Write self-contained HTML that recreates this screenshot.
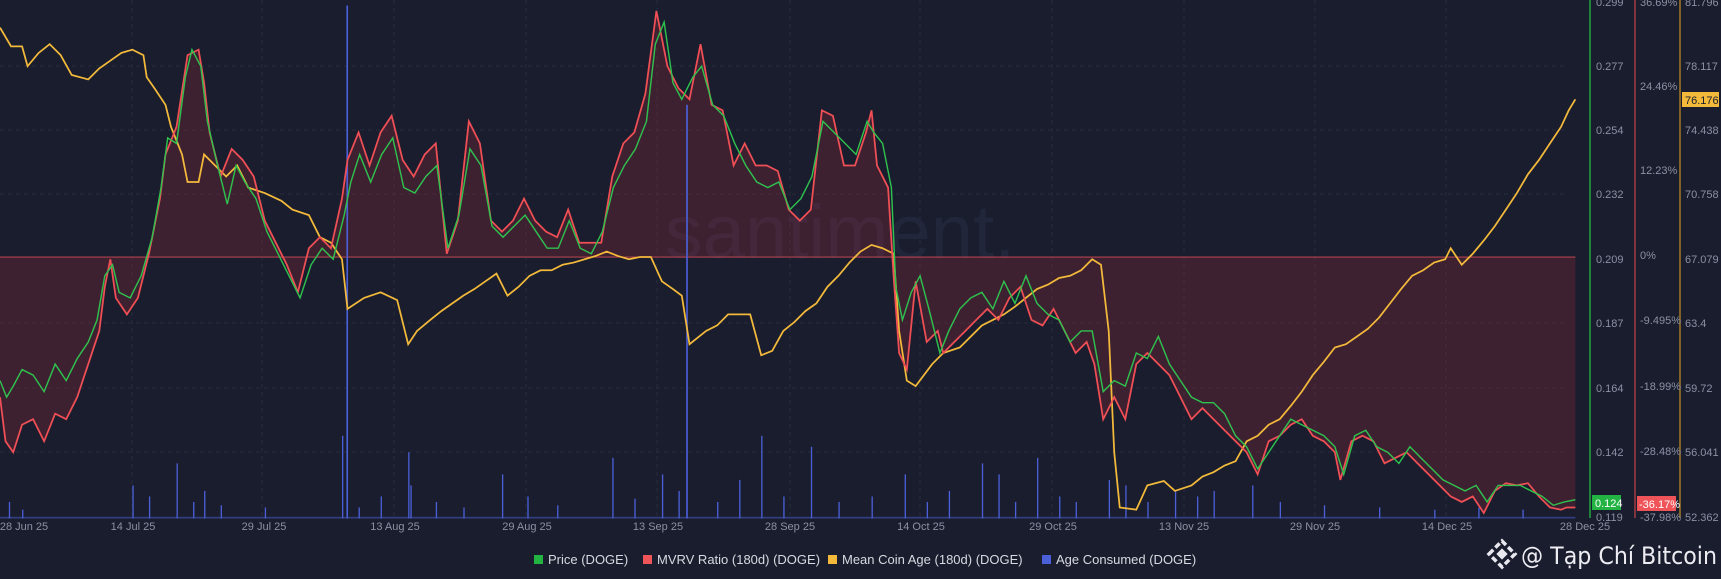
<!DOCTYPE html>
<html><head><meta charset="utf-8"><style>
html,body{margin:0;padding:0;background:#1a1d2d;}
body{width:1721px;height:579px;overflow:hidden;position:relative;font-family:"Liberation Sans",sans-serif;}
svg{position:absolute;left:0;top:0}
.ax{font-size:11px;fill:#8b90a4}
.dt{font-size:11px;fill:#8b90a4}
.lg{font-size:13px;fill:#d7d9e2}
</style></head><body>
<svg width="1721" height="579" viewBox="0 0 1721 579">
<rect width="1721" height="579" fill="#1a1d2d"/>
<text x="840" y="258" font-size="76" fill="#22263a" text-anchor="middle" font-family="Liberation Sans, sans-serif">santiment.</text>
<g stroke="#262a3c" stroke-width="1" stroke-dasharray="4 4">
<line x1="0" y1="66" x2="1568" y2="66"/><line x1="0" y1="130" x2="1568" y2="130"/><line x1="0" y1="194" x2="1568" y2="194"/><line x1="0" y1="323" x2="1568" y2="323"/><line x1="0" y1="388" x2="1568" y2="388"/><line x1="0" y1="452" x2="1568" y2="452"/>
<line x1="132" y1="0" x2="132" y2="518"/><line x1="262" y1="0" x2="262" y2="518"/><line x1="394" y1="0" x2="394" y2="518"/><line x1="526" y1="0" x2="526" y2="518"/><line x1="657" y1="0" x2="657" y2="518"/><line x1="790" y1="0" x2="790" y2="518"/><line x1="920" y1="0" x2="920" y2="518"/><line x1="1052" y1="0" x2="1052" y2="518"/><line x1="1184" y1="0" x2="1184" y2="518"/><line x1="1315" y1="0" x2="1315" y2="518"/><line x1="1446" y1="0" x2="1446" y2="518"/>
</g>
<g transform="scale(1.1032)">
<polygon fill="rgba(140,45,60,0.32)" points="0,233 0,360 5,400 12,410 20,385 30,380 40,400 50,375 60,380 70,360 80,330 90,300 95,260 100,235 105,270 115,285 125,270 135,230 145,180 150,140 160,115 170,50 180,45 185,75 190,120 200,160 210,135 220,145 230,160 240,200 250,220 260,240 270,265 280,225 290,215 300,225 310,180 315,145 325,120 335,150 345,120 355,105 365,145 375,160 385,140 395,130 405,230 415,200 425,110 435,130 445,200 455,210 465,200 475,180 485,200 495,210 505,215 515,190 525,220 535,220 545,220 555,160 565,130 575,120 585,85 595,10 605,60 615,80 625,90 635,40 645,95 655,100 665,150 675,130 685,150 695,150 705,155 715,190 725,200 735,190 745,100 755,105 765,150 775,150 785,120 790,100 795,150 805,170 810,250 815,320 822,335 830,255 840,310 850,300 855,320 865,310 875,300 885,290 895,280 905,290 915,270 925,260 935,290 945,295 955,280 965,300 975,320 985,310 992,330 1000,380 1010,360 1020,380 1030,330 1040,320 1050,330 1060,340 1070,360 1080,380 1090,370 1100,380 1110,390 1120,400 1130,410 1140,430 1150,400 1160,395 1170,385 1180,380 1190,395 1200,400 1210,410 1215,435 1225,400 1235,395 1245,400 1255,420 1265,415 1275,410 1285,420 1295,430 1305,440 1315,450 1325,455 1335,450 1345,465 1355,445 1365,438 1375,440 1385,438 1395,450 1405,460 1415,462 1420,460 1428,460 1428,233"/>
<line x1="0" y1="233" x2="1428" y2="233" stroke="#b0424e" stroke-width="1"/>
<g fill="#4a5fd8">
<rect x="314" y="5" width="1.5" height="465"/><rect x="622" y="95" width="1.5" height="375"/>
<rect x="8" y="455" width="1.2" height="15"/><rect x="20" y="462" width="1.2" height="8"/><rect x="120" y="440" width="1.2" height="30"/><rect x="135" y="450" width="1.2" height="20"/><rect x="160" y="420" width="1.2" height="50"/><rect x="175" y="455" width="1.2" height="15"/><rect x="185" y="445" width="1.2" height="25"/><rect x="200" y="458" width="1.2" height="12"/><rect x="240" y="460" width="1.2" height="10"/><rect x="310" y="395" width="1.2" height="75"/><rect x="325" y="460" width="1.2" height="10"/><rect x="345" y="450" width="1.2" height="20"/><rect x="370" y="410" width="1.2" height="60"/><rect x="372" y="440" width="1.2" height="30"/><rect x="395" y="455" width="1.2" height="15"/><rect x="420" y="460" width="1.2" height="10"/><rect x="455" y="430" width="1.2" height="40"/><rect x="478" y="450" width="1.2" height="20"/><rect x="505" y="458" width="1.2" height="12"/><rect x="555" y="415" width="1.2" height="55"/><rect x="575" y="452" width="1.2" height="18"/><rect x="600" y="430" width="1.2" height="40"/><rect x="615" y="445" width="1.2" height="25"/><rect x="650" y="455" width="1.2" height="15"/><rect x="670" y="435" width="1.2" height="35"/><rect x="690" y="395" width="1.2" height="75"/><rect x="710" y="450" width="1.2" height="20"/><rect x="735" y="405" width="1.2" height="65"/><rect x="760" y="455" width="1.2" height="15"/><rect x="790" y="450" width="1.2" height="20"/><rect x="820" y="430" width="1.2" height="40"/><rect x="840" y="455" width="1.2" height="15"/><rect x="860" y="445" width="1.2" height="25"/><rect x="890" y="420" width="1.2" height="50"/><rect x="905" y="430" width="1.2" height="40"/><rect x="920" y="455" width="1.2" height="15"/><rect x="940" y="415" width="1.2" height="55"/><rect x="960" y="450" width="1.2" height="20"/><rect x="975" y="455" width="1.2" height="15"/><rect x="1005" y="435" width="1.2" height="35"/><rect x="1020" y="440" width="1.2" height="30"/><rect x="1040" y="455" width="1.2" height="15"/><rect x="1065" y="445" width="1.2" height="25"/><rect x="1085" y="450" width="1.2" height="20"/><rect x="1100" y="445" width="1.2" height="25"/><rect x="1135" y="440" width="1.2" height="30"/><rect x="1160" y="455" width="1.2" height="15"/><rect x="1200" y="458" width="1.2" height="12"/><rect x="1250" y="460" width="1.2" height="10"/><rect x="1300" y="462" width="1.2" height="8"/><rect x="1340" y="460" width="1.2" height="10"/><rect x="1380" y="462" width="1.2" height="8"/>
<rect x="0" y="468.5" width="1428" height="1.5" opacity="0.5"/>
</g>
<polyline fill="none" stroke="#f2b93b" stroke-width="1.6" points="0,25 10,42 20,42 25,60 35,48 45,40 55,50 65,68 80,72 90,62 100,55 110,48 120,45 130,50 133,70 140,80 150,95 155,115 165,140 170,165 180,165 185,140 195,150 205,160 215,150 225,170 240,175 255,182 265,190 280,195 290,215 300,220 310,235 315,280 330,270 345,265 360,272 370,312 378,300 390,290 400,282 410,275 420,268 430,262 440,255 450,248 460,268 470,260 480,250 490,245 500,245 510,240 520,238 530,235 540,232 550,228 560,232 570,235 580,233 590,233 600,255 610,262 618,268 625,312 640,300 650,295 660,285 680,285 690,322 700,318 710,300 720,292 730,282 740,275 750,260 760,250 770,238 780,228 790,222 800,225 810,230 815,300 822,345 830,350 845,330 855,320 870,315 880,305 890,295 900,290 910,285 920,278 930,270 940,262 950,258 960,252 970,250 980,245 990,235 998,240 1005,300 1010,410 1015,460 1030,462 1040,440 1055,436 1065,445 1080,440 1090,432 1100,428 1110,422 1120,418 1130,400 1140,395 1150,385 1160,380 1170,368 1180,355 1190,340 1200,328 1210,315 1220,312 1230,305 1240,298 1250,288 1260,275 1270,262 1280,250 1290,245 1300,238 1310,235 1315,225 1325,240 1335,230 1345,218 1355,205 1365,190 1375,175 1385,158 1395,145 1405,130 1415,115 1422,100 1428,90"/>
<polyline fill="none" stroke="#ef4f55" stroke-width="1.6" points="0,360 5,400 12,410 20,385 30,380 40,400 50,375 60,380 70,360 80,330 90,300 95,260 100,235 105,270 115,285 125,270 135,230 145,180 150,140 160,115 170,50 180,45 185,75 190,120 200,160 210,135 220,145 230,160 240,200 250,220 260,240 270,265 280,225 290,215 300,225 310,180 315,145 325,120 335,150 345,120 355,105 365,145 375,160 385,140 395,130 405,230 415,200 425,110 435,130 445,200 455,210 465,200 475,180 485,200 495,210 505,215 515,190 525,220 535,220 545,220 555,160 565,130 575,120 585,85 595,10 605,60 615,80 625,90 635,40 645,95 655,100 665,150 675,130 685,150 695,150 705,155 715,190 725,200 735,190 745,100 755,105 765,150 775,150 785,120 790,100 795,150 805,170 810,250 815,320 822,335 830,255 840,310 850,300 855,320 865,310 875,300 885,290 895,280 905,290 915,270 925,260 935,290 945,295 955,280 965,300 975,320 985,310 992,330 1000,380 1010,360 1020,380 1030,330 1040,320 1050,330 1060,340 1070,360 1080,380 1090,370 1100,380 1110,390 1120,400 1130,410 1140,430 1150,400 1160,395 1170,385 1180,380 1190,395 1200,400 1210,410 1215,435 1225,400 1235,395 1245,400 1255,420 1265,415 1275,410 1285,420 1295,430 1305,440 1315,450 1325,455 1335,450 1345,465 1355,445 1365,438 1375,440 1385,438 1395,450 1405,460 1415,462 1420,460 1428,460"/>
<polyline fill="none" stroke="#2fc14e" stroke-width="1.3" points="0,345 6,360 12,350 20,335 30,340 40,355 50,330 60,345 70,325 80,310 88,290 95,250 102,240 108,265 118,270 128,250 138,215 146,170 152,125 160,130 168,70 174,45 182,60 188,110 196,145 206,185 214,150 222,165 232,180 242,210 252,230 262,250 272,270 282,240 292,225 302,235 312,195 318,165 326,140 336,165 346,140 356,125 366,170 376,175 386,160 396,150 406,225 416,195 426,135 436,150 446,205 456,215 466,205 476,195 486,210 496,225 506,225 516,200 526,225 536,230 546,210 556,170 566,150 576,135 586,110 594,40 602,20 610,75 618,90 628,70 636,60 646,95 656,105 666,130 676,150 686,165 696,170 706,165 716,190 726,180 736,160 746,110 756,120 766,130 776,140 786,110 792,120 800,130 808,170 812,260 818,290 826,265 834,250 842,280 852,320 860,300 870,280 880,270 890,265 900,280 910,255 920,275 930,250 940,275 950,285 960,290 970,310 980,300 990,300 1000,355 1010,345 1020,350 1030,320 1040,325 1050,305 1060,330 1070,345 1080,360 1090,365 1100,365 1110,375 1120,395 1130,405 1140,425 1150,410 1160,395 1170,380 1180,385 1190,390 1200,395 1210,405 1218,430 1228,395 1238,390 1248,405 1258,410 1268,420 1278,405 1288,415 1298,425 1308,435 1318,440 1328,445 1338,440 1348,455 1358,440 1368,440 1378,440 1388,445 1398,450 1408,458 1418,455 1428,453"/>
</g>
<line x1="1590" y1="0" x2="1590" y2="518" stroke="#1fa33f" stroke-width="1.5"/>
<line x1="1635" y1="0" x2="1635" y2="518" stroke="#a33b45" stroke-width="1.5"/>
<line x1="1680" y1="0" x2="1680" y2="518" stroke="#a37a24" stroke-width="1.5"/>
<g class="ax">
<text x="1596" y="6">0.299</text><text x="1596" y="70">0.277</text><text x="1596" y="134">0.254</text><text x="1596" y="198">0.232</text><text x="1596" y="263">0.209</text><text x="1596" y="327">0.187</text><text x="1596" y="392">0.164</text><text x="1596" y="456">0.142</text><text x="1596" y="521">0.119</text>
<text x="1640" y="6">36.69%</text><text x="1640" y="90">24.46%</text><text x="1640" y="174">12.23%</text><text x="1640" y="259">0%</text><text x="1640" y="324">-9.495%</text><text x="1640" y="390">-18.99%</text><text x="1640" y="455">-28.48%</text><text x="1640" y="521">-37.98%</text>
<text x="1685" y="6">81.796</text><text x="1685" y="70">78.117</text><text x="1685" y="134">74.438</text><text x="1685" y="198">70.758</text><text x="1685" y="263">67.079</text><text x="1685" y="327">63.4</text><text x="1685" y="392">59.72</text><text x="1685" y="456">56.041</text><text x="1685" y="521">52.362</text>
</g>
<rect x="1592" y="495" width="29" height="15" fill="#22b342"/><text x="1595" y="507" font-size="11" fill="#fff">0.124</text>
<rect x="1637" y="496" width="39" height="15" fill="#ef5459"/><text x="1639" y="508" font-size="11" fill="#fff">-36.17%</text>
<rect x="1682" y="92" width="37" height="15" fill="#f2b93b"/><text x="1685" y="104" font-size="11" fill="#1a1d2d">76.176</text>
<g class="dt" text-anchor="middle">
<text x="24" y="530">28 Jun 25</text><text x="133" y="530">14 Jul 25</text><text x="264" y="530">29 Jul 25</text><text x="395" y="530">13 Aug 25</text><text x="527" y="530">29 Aug 25</text><text x="658" y="530">13 Sep 25</text><text x="790" y="530">28 Sep 25</text><text x="921" y="530">14 Oct 25</text><text x="1053" y="530">29 Oct 25</text><text x="1184" y="530">13 Nov 25</text><text x="1315" y="530">29 Nov 25</text><text x="1447" y="530">14 Dec 25</text><text x="1585" y="530">28 Dec 25</text>
</g>
<rect x="534" y="555" width="9" height="9" fill="#22b342"/><text class="lg" x="548" y="564">Price (DOGE)</text>
<rect x="643" y="555" width="9" height="9" fill="#ef5459"/><text class="lg" x="657" y="564">MVRV Ratio (180d) (DOGE)</text>
<rect x="828" y="555" width="9" height="9" fill="#f2b93b"/><text class="lg" x="842" y="564">Mean Coin Age (180d) (DOGE)</text>
<rect x="1042" y="555" width="9" height="9" fill="#4a5fd8"/><text class="lg" x="1056" y="564">Age Consumed (DOGE)</text>
<g transform="translate(1489,554)" fill="none" stroke="#e8e8ee" stroke-width="3.5">
<path d="M0,0 L13,-13 L26,0 L13,13 Z" stroke-dasharray="6 3"/>
<rect x="9" y="-4" width="8" height="8" transform="rotate(45 13 0)" fill="#e8e8ee" stroke="none"/>
</g>
<text x="1521" y="564" font-size="24" fill="#ececf2" font-family="DejaVu Sans, sans-serif" textLength="196" lengthAdjust="spacingAndGlyphs">@ Tạp Chí Bitcoin</text>
</svg>
</body></html>
